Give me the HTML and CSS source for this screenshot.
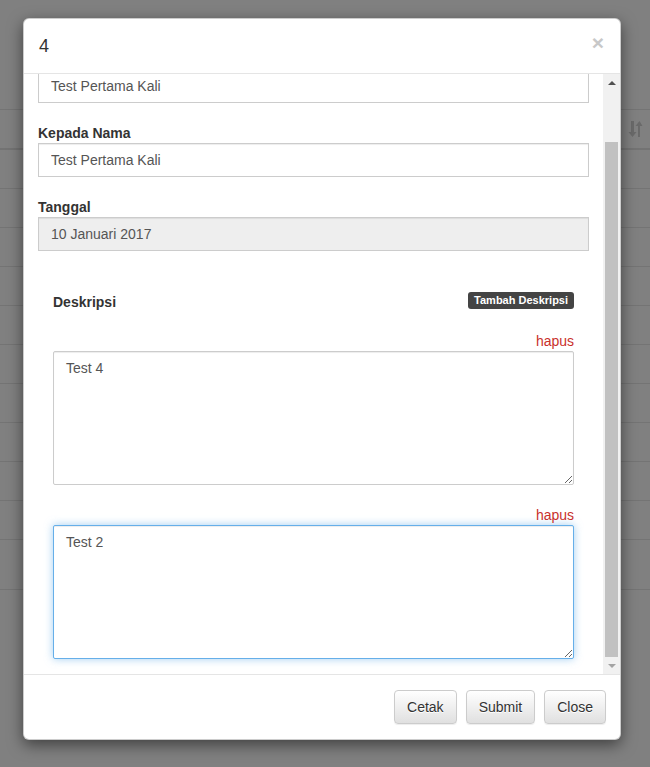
FILE: index.html
```html
<!DOCTYPE html>
<html>
<head>
<meta charset="utf-8">
<link rel="stylesheet" href="styles.css">
</head>
<body>
<div class="page">
  <div class="bg-top"></div>
  <div class="bg-head">
    <svg class="sort" width="16" height="18" viewBox="0 0 16 18"><path d="M3 1v11H0.5L4.5 17l4-5H6V1z" fill="#6a6a6a"/><path d="M12 17V6h2.5L11.5 1 7.5 6H10v11z" fill="#6a6a6a"/></svg>
  </div>
  <div class="bg-row"></div><div class="bg-row"></div><div class="bg-row"></div><div class="bg-row"></div>
  <div class="bg-row"></div><div class="bg-row"></div><div class="bg-row"></div><div class="bg-row"></div>
  <div class="bg-row"></div><div class="bg-row"></div><div class="bg-row last"></div>
</div>

<div class="modal">
  <div class="modal-header">
    <h4 class="modal-title">4</h4>
    <span class="close">×</span>
  </div>
  <div class="modal-body">
    <div class="viewport">
      <div class="content">
        <div class="form-group first">
          <input class="form-control" type="text" value="Test Pertama Kali">
        </div>
        <div class="form-group">
          <label>Kepada Nama</label>
          <input class="form-control" type="text" value="Test Pertama Kali">
        </div>
        <div class="form-group">
          <label>Tanggal</label>
          <input class="form-control" type="text" value="10 Januari 2017" disabled>
        </div>
        <div class="desc">
          <div class="desc-head">
            <span class="desc-title">Deskripsi</span>
            <span class="badge">Tambah Deskripsi</span>
          </div>
          <div class="desc-item">
            <div class="hapus">hapus</div>
            <textarea class="form-control area">Test 4</textarea>
          </div>
          <div class="desc-item">
            <div class="hapus">hapus</div>
            <textarea class="form-control area focus">Test 2</textarea>
          </div>
        </div>
      </div>
    </div>
    <div class="scrollbar">
      <div class="sb-btn"><span class="tri up"></span></div>
      <div class="sb-track"><div class="sb-thumb"></div></div>
      <div class="sb-btn"><span class="tri down"></span></div>
    </div>
  </div>
  <div class="modal-footer">
    <button class="btn">Cetak</button>
    <button class="btn">Submit</button>
    <button class="btn">Close</button>
  </div>
</div>
</body>
</html>
```

FILE: styles.css
```css
* { box-sizing: border-box; }
html, body { margin: 0; padding: 0; }
body {
  width: 650px;
  height: 767px;
  overflow: hidden;
  background: #808080;
  font-family: "Liberation Sans", Arial, sans-serif;
  font-size: 14px;
  line-height: 20px;
  color: #333;
}
.page { width: 650px; }
.bg-top { height: 110px; border-bottom: 1px solid #747474; }
.bg-head {
  height: 40px;
  border-bottom: 2px solid #737373;
  display: flex;
  justify-content: flex-end;
  align-items: center;
  padding-right: 6px;
}
.bg-row { height: 39px; border-bottom: 1px solid #747474; }
.bg-row.last { height: 50px; }

.modal {
  position: absolute;
  left: 23px;
  top: 18px;
  width: 598px;
  height: 722px;
  background: #fff;
  border: 1px solid rgba(0,0,0,.2);
  border-radius: 6px;
  box-shadow: 0 5px 15px rgba(0,0,0,.5);
  display: flex;
  flex-direction: column;
  overflow: hidden;
}
.modal-header {
  height: 55px;
  padding: 0 15px;
  border-bottom: 1px solid #e5e5e5;
  display: flex;
  align-items: center;
  justify-content: space-between;
}
.modal-title {
  margin: 0;
  font-size: 18px;
  font-weight: normal;
  line-height: 26px;
  color: #333;
}
.close {
  font-size: 21px;
  font-weight: bold;
  color: #c8c8c8;
  line-height: 21px;
  margin-right: 1px;
  margin-top: -8px;
}
.modal-body {
  height: 600px;
  display: flex;
}
.viewport {
  width: 580px;
  height: 600px;
  overflow: hidden;
}
.content {
  padding: 0 14px 0 14px;
  margin-top: -5px;
}
.form-group { margin-bottom: 20px; }
.form-group label {
  display: block;
  font-weight: bold;
  margin-bottom: 0;
  line-height: 20px;
}
.form-control {
  display: block;
  width: 551px;
  height: 34px;
  padding: 6px 12px;
  font-family: "Liberation Sans", Arial, sans-serif;
  font-size: 14px;
  line-height: 20px;
  color: #555;
  background: #fff;
  border: 1px solid #ccc;
  border-radius: 0;
  box-shadow: inset 0 1px 1px rgba(0,0,0,.075);
  outline: none;
}
.form-control[disabled] { background: #eee; color: #555; -webkit-text-fill-color: #555; opacity: 1; }

.desc { padding: 0 15px; margin-top: 41px; }
.desc-head {
  display: flex;
  justify-content: space-between;
  align-items: flex-start;
  height: 20px;
}
.desc-title { font-weight: bold; line-height: 20px; }
.badge {
  background: #444;
  color: #fff;
  font-size: 11px;
  font-weight: bold;
  line-height: 13px;
  padding: 2px 6px 2px 6px;
  border-radius: 3px;
}
.desc-item { margin-top: 20px; }
.desc-head + .desc-item { margin-top: 19px; }
.hapus {
  text-align: right;
  color: #c9302c;
  line-height: 20px;
}
.area {
  width: 521px;
  height: 134px;
  resize: vertical;
  border-radius: 2px;
}
.area.focus {
  border-color: #66afe9;
  box-shadow: inset 0 1px 1px rgba(0,0,0,.075), 0 0 8px rgba(102,175,233,.6);
}

.scrollbar {
  width: 17px;
  height: 600px;
  background: #f1f1f1;
  display: flex;
  flex-direction: column;
}
.sb-btn {
  height: 17px;
  display: flex;
  align-items: center;
  justify-content: center;
}
.sb-track { flex: 1; display: flex; flex-direction: column; padding-top: 51px; }
.sb-thumb { flex: 1; background: #c1c1c1; margin: 0 2px; }
.tri { width: 0; height: 0; border-left: 4px solid transparent; border-right: 4px solid transparent; }
.tri.up { border-bottom: 4px solid #505050; }
.tri.down { border-top: 4px solid #a3a3a3; }

.modal-footer {
  flex: 1;
  border-top: 1px solid #e5e5e5;
  padding: 15px 14px 0 15px;
  display: flex;
  justify-content: flex-end;
  align-items: flex-start;
  gap: 9px;
}
.btn {
  height: 34px;
  padding: 6px 12px;
  font-family: "Liberation Sans", Arial, sans-serif;
  font-size: 14px;
  line-height: 20px;
  color: #333;
  border: 1px solid #ccc;
  border-radius: 4px;
  background: linear-gradient(to bottom, #fff 0, #e0e0e0 100%);
  text-shadow: 0 1px 0 #fff;
  box-shadow: inset 0 1px 0 rgba(255,255,255,.15), 0 1px 1px rgba(0,0,0,.075);
}
```
